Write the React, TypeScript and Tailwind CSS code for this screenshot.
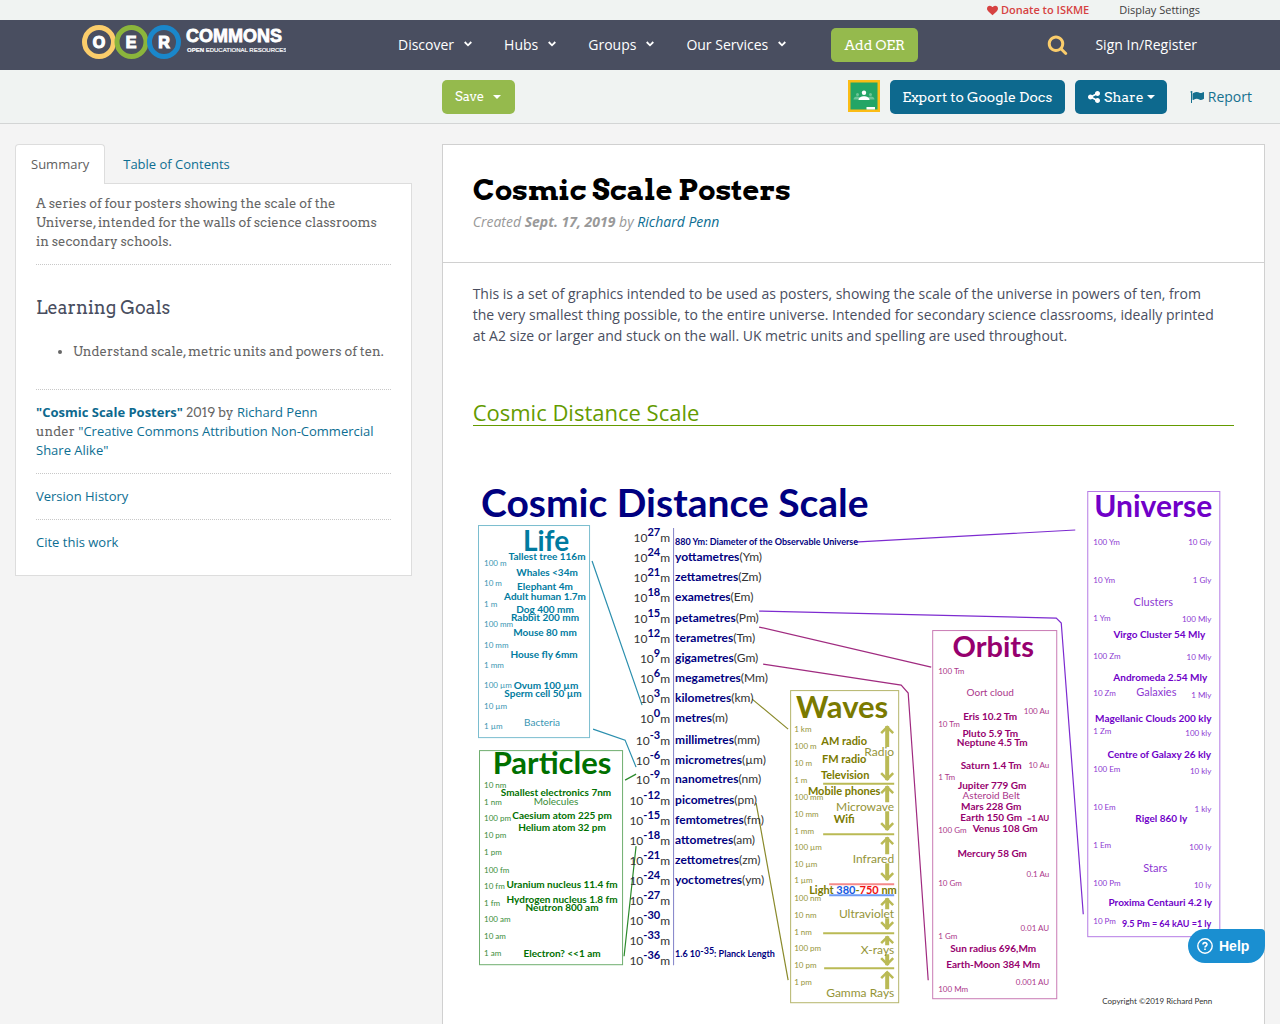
import React from 'react';

const slab = "font-[Arvo,'DejaVu_Serif',serif]";

const icons = {
  heart: 'M896 1664q-26 0-44-18l-624-602q-10-8-27.5-26t-55.5-65.5-68-97.5-53.5-121-23.5-138q0-220 127-344t351-124q62 0 126.5 21.5t120 58 95.5 68.5 76 68q36-36 76-68t95.5-68.5 120-58 126.5-21.5q224 0 351 124t127 344q0 221-229 450l-623 600q-18 18-44 18z',
  search: 'M1216 832q0-185-131.5-316.5t-316.5-131.5-316.5 131.5-131.5 316.5 131.5 316.5 316.5 131.5 316.5-131.5 131.5-316.5zm512 832q0 52-38 90t-90 38q-54 0-90-38l-343-342q-179 124-399 124-143 0-273.5-55.5t-225-150-150-225-55.5-273.5 55.5-273.5 150-225 225-150 273.5-55.5 273.5 55.5 225 150 150 225 55.5 273.5q0 220-124 399l343 343q37 37 37 90z',
  share: 'M1344 1024q133 0 226.5 93.5t93.5 226.5-93.5 226.5-226.5 93.5-226.5-93.5-93.5-226.5q0-12 2-34l-360-180q-92 86-218 86-133 0-226.5-93.5t-93.5-226.5 93.5-226.5 226.5-93.5q126 0 218 86l360-180q-2-22-2-34 0-133 93.5-226.5t226.5-93.5 226.5 93.5 93.5 226.5-93.5 226.5-226.5 93.5q-126 0-218-86l-360 180q2 22 2 34t-2 34l360 180q92-86 218-86z',
  flag: 'M320 256q0 72-64 110v1266q0 13-9.5 22.5t-22.5 9.5h-64q-13 0-22.5-9.5t-9.5-22.5v-1266q-64-38-64-110 0-53 37.5-90.5t90.5-37.5 90.5 37.5 37.5 90.5zm1472 64v763q0 25-12.5 38.5t-39.5 27.5q-215 116-369 116-61 0-123.5-22t-108.5-48-115.5-48-142.5-22q-192 0-464 146-17 9-33 9-26 0-45-19t-19-45v-742q0-32 31-55 21-14 79-43 236-120 421-120 107 0 200 29t219 88q38 19 88 19 54 0 117.5-21t110-47 88-47 54.5-21q26 0 45 19t19 45z',
};

const Icon: React.FC<{ name: keyof typeof icons; className: string }> = ({ name, className }) => (
  <svg viewBox="0 0 1792 1792" fill="currentColor" className={className} aria-hidden="true">
    <path d={icons[name]} />
  </svg>
);

const Caret: React.FC = () => (
  <svg viewBox="0 0 8 4" fill="currentColor" className="w-2 h-1 shrink-0" aria-hidden="true">
    <path d="M0 0h8L4 4z" />
  </svg>
);

const Logo: React.FC = () => (
  <svg viewBox="0 0 204 36" className="w-[204px] h-9 shrink-0" role="img" aria-label="OER Commons">
    <g fill="none" strokeWidth="5">
      <circle cx="17" cy="18" r="14.5" stroke="#fbcd6b" />
      <circle cx="49.5" cy="18" r="14.5" stroke="#8bb53c" />
      <circle cx="82" cy="18" r="14.5" stroke="#1a87cb" />
    </g>
    <g fill="#fff" fontFamily="'Liberation Sans', sans-serif" fontWeight="bold">
      <g fontSize="16" textAnchor="middle" stroke="#fff" strokeWidth="1.2">
        <text x="17" y="24">O</text>
        <text x="49" y="24">E</text>
        <text x="82" y="24">R</text>
      </g>
      <text x="104" y="18" fontSize="18" stroke="#fff" strokeWidth="0.8">COMMONS</text>
      <text x="105" y="28" fontSize="6" stroke="#fff" strokeWidth="0.2">OPEN <tspan fontWeight="normal">EDUCATIONAL RESOURCES</tspan></text>
    </g>
  </svg>
);

const NavItem: React.FC<{ label: string }> = ({ label }) => (
  <button className="flex items-center gap-[10px] whitespace-nowrap">
    {label}
    <svg viewBox="0 0 8 6" className="w-2 h-[6px]" fill="none" stroke="currentColor" strokeWidth="1.8" aria-hidden="true">
      <path d="M0.7 1L4 4.3L7.3 1" />
    </svg>
  </button>
);

const Header: React.FC = () => (
  <header>
    <div className="h-5 bg-[#f0f3f2] flex items-center justify-end gap-[30px] pr-20 text-[11px]">
      <a href="#donate" className="flex items-center gap-[3px] font-semibold text-[#d64242]">
        <Icon name="heart" className="w-[11px] h-[11px]" />
        Donate to ISKME
      </a>
      <a href="#settings" className="text-[#404040]">Display Settings</a>
    </div>
    <nav className="h-[50px] bg-[#494e60] text-white text-[14px] flex items-center pl-[82px] pr-[83px]">
      <a href="#home" className="-mt-[6px]"><Logo /></a>
      <div className="flex items-center gap-8 ml-28 pb-[2px]">
        <NavItem label="Discover" />
        <NavItem label="Hubs" />
        <NavItem label="Groups" />
        <NavItem label="Our Services" />
      </div>
      <button className={`${slab} ml-[45px] h-[34px] w-[87px] rounded-[5px] bg-[#95ba4d] text-[14px] whitespace-nowrap`}>Add OER</button>
      <div className="ml-auto flex items-center gap-[27px] pb-[2px]">
        <button aria-label="Search" className="text-[#fbcd6b]"><Icon name="search" className="w-[21px] h-[21px]" /></button>
        <a href="#signin" className="whitespace-nowrap">Sign In/Register</a>
      </div>
    </nav>
  </header>
);

const Toolbar: React.FC = () => (
  <div className="flex h-[54px] bg-[#f0f3f2] border-b border-[#d3d5d5]">
    <div className="w-1/3 shrink-0" />
    <div className="w-2/3 flex justify-between px-[15px] pt-[10px]">
      <button className={`${slab} flex items-center justify-center gap-[9px] h-[34px] w-[73px] rounded-[5px] bg-[#95ba4d] text-white text-[13px]`}>
        Save <Caret />
      </button>
      <div className="flex gap-[10px] text-white">
        <button aria-label="Share to Google Classroom" className="h-8">
          <svg viewBox="0 0 32 32" className="w-8 h-8">
            <rect width="32" height="32" fill="#fbbc15" />
            <rect x="2.500" y="2.500" width="27" height="27" fill="#23a566" />
            <g fill="#6dc497">
              <circle cx="9.500" cy="14.500" r="1.500" />
              <circle cx="22.500" cy="14.500" r="1.500" />
              <path d="M5.500 19.500c0-4 7-4 8 0zM18.500 19.500c1-4 8-4 8 0z" />
            </g>
            <circle cx="16" cy="12.800" r="2.200" fill="#fff" />
            <path d="M10.500 20c0-5 11-5 11 0z" fill="#fff" />
            <rect x="18.500" y="27" width="8.500" height="2.500" fill="#fff" />
          </svg>
        </button>
        <button className={`${slab} h-[34px] w-[175px] rounded-[5px] bg-[#0d698e] text-[14px] whitespace-nowrap`}>Export to Google Docs</button>
        <button className={`${slab} flex items-center justify-center gap-[3px] h-[34px] w-[92px] rounded-[5px] bg-[#0d698e] text-[14px]`}>
          <Icon name="share" className="w-[14px] h-[14px]" /> Share <Caret />
        </button>
        <a href="#report" className="flex items-center gap-[4px] h-[33px] px-[13px] text-[14px] text-[#16708f]">
          <Icon name="flag" className="w-[14px] h-[14px]" /> Report
        </a>
      </div>
    </div>
  </div>
);

const Sidebar: React.FC = () => (
  <aside className="w-1/3 shrink-0 px-[15px] text-[13px] leading-[19px]">
    <div className="flex" role="tablist">
      <button role="tab" aria-selected="true" className="relative h-10 -mb-px px-[15px] bg-white border border-b-0 border-[#dddddd] rounded-t text-[#606060]">Summary</button>
      <button role="tab" aria-selected="false" className="h-10 -mb-px px-[18px] text-[#0d6e92]">Table of Contents</button>
    </div>
    <div className="bg-white border border-[#dddddd] px-5 pt-[10px] pb-[23px] text-[#666666]">
      <p className={`${slab} pb-[13px] border-b border-dotted border-[#c8c8c8]`}>
        A series of four posters showing the scale of the Universe, intended for the walls of science classrooms in secondary schools.
      </p>
      <div className={`${slab} pt-[30px] pb-7 border-b border-dotted border-[#c8c8c8]`}>
        <h4 className="text-[18px] leading-[26px] text-[#494e60]">Learning Goals</h4>
        <ul className="mt-[21px] pl-[37px] list-disc">
          <li>Understand scale, metric units and powers of ten.</li>
        </ul>
      </div>
      <div className="py-[13px] border-b border-dotted border-[#c8c8c8]">
        <a href="#work" className="font-bold text-[#0d698e]">"Cosmic Scale Posters"</a>{' '}
        <span className={slab}>2019 by</span>{' '}
        <a href="#author" className="text-[#0d6e92]">Richard Penn</a>
        <br />
        <span className={slab}>under</span>{' '}
        <a href="#license" className="text-[#0d6e92]">"Creative Commons Attribution Non-Commercial Share Alike"</a>
      </div>
      <div className="py-[13px] border-b border-dotted border-[#c8c8c8]">
        <a href="#history" className="text-[#0d6e92]">Version History</a>
      </div>
      <div className="pt-[13px]">
        <a href="#cite" className="text-[#0d6e92]">Cite this work</a>
      </div>
    </div>
  </aside>
);

type Label = [number, number, string];

// Poster text is placed by its baseline, in the drawing's own units.
const Labels: React.FC<{ items: Label[]; size?: number; bold?: boolean; anchor?: 'start' | 'middle' | 'end' }> = ({
  items,
  size = 8,
  bold = false,
  anchor = 'start',
}) => (
  <g fontSize={size} fontWeight={bold ? 'bold' : 'normal'} textAnchor={anchor}>
    {items.map(([x, y, text]) => (
      <text key={text + y} x={x} y={y}>{text}</text>
    ))}
  </g>
);

const powers: [number, string, string, string][] = [
  [542, '27', '', ''],
  [562, '24', 'yottametres', '(Ym)'],
  [582, '21', 'zettametres', '(Zm)'],
  [602, '18', 'exametres', '(Em)'],
  [623, '15', 'petametres', '(Pm)'],
  [643, '12', 'terametres', '(Tm)'],
  [663, '9', 'gigametres', '(Gm)'],
  [683, '6', 'megametres', '(Mm)'],
  [703, '3', 'kilometres', '(km)'],
  [723, '0', 'metres', '(m)'],
  [745, '-3', 'millimetres', '(mm)'],
  [765, '-6', 'micrometres', '(µm)'],
  [784, '-9', 'nanometres', '(nm)'],
  [805, '-12', 'picometres', '(pm)'],
  [825, '-15', 'femtometres', '(fm)'],
  [845, '-18', 'attometres', '(am)'],
  [865, '-21', 'zettometres', '(zm)'],
  [885, '-24', 'yoctometres', '(ym)'],
  [905, '-27', '', ''],
  [925, '-30', '', ''],
  [945, '-33', '', ''],
  [965, '-36', '', ''],
];

const arrows: [number, number][] = [[726, 780], [786, 830], [837, 880], [898, 929], [936, 965]];

const Poster: React.FC = () => (
  <svg viewBox="473 476 761 560" className="w-full" fontFamily="Lato, sans-serif" role="img" aria-label="Cosmic Distance Scale poster">
    <text x="481" y="517" fontSize="39" fontWeight="bold" fill="#000080">Cosmic Distance Scale</text>

    <g fill="none" strokeWidth="1.2">
      <path d="M592 561L642 705M593 729L625 740L636 767" stroke="#2b8fae" />
      <path d="M625 780L636 774M636 846L624 956" stroke="#2c8a2c" />
      <path d="M854 542L1075 530M759 611L1056 618L1061 623L1083 914" stroke="#7d2bd0" />
      <path d="M759 627L931 667M763 664L901 685L908 693L928 980" stroke="#a02b80" />
      <path d="M752 699L788 729M756 803L788 980" stroke="#8a8a2b" />
    </g>
    <g fill="none" strokeWidth="1">
      <rect x="478.500" y="525.500" width="111" height="212" stroke="#7bbdcf" />
      <rect x="479.500" y="750.500" width="143" height="214" stroke="#6fae6f" />
      <rect x="790.500" y="690.500" width="108" height="312" stroke="#b5b56b" />
      <rect x="932.500" y="630.500" width="124" height="368" stroke="#c97bb4" />
      <rect x="1087.500" y="491.500" width="132" height="445" stroke="#b57be5" />
    </g>

    {/* powers of ten */}
    <path d="M673.500 528V965" stroke="#8080c8" />
    {powers.map(([y, power, name, unit]) => (
      <g key={power} fontSize="12" fill="#333">
        <text x="670" y={y} textAnchor="end">
          10<tspan dy="-6" fontSize="11" fontWeight="bold" fill="#000080">{power}</tspan><tspan dy="6">m</tspan>
        </text>
        {name && (
          <text x="675" y={y - 1}>
            <tspan fontWeight="bold" fill="#000080">{name}</tspan>{unit}
          </text>
        )}
      </g>
    ))}
    <g fill="#000080" fontSize="9" fontWeight="bold">
      <text x="675" y="545">880 Ym: Diameter of the Observable Universe</text>
      <text x="675" y="957">1.6 10<tspan dy="-3">-35</tspan><tspan dy="3">: Planck Length</tspan></text>
    </g>

    <g fill="#007ba0">
      <Labels size={28} bold anchor="middle" items={[[546, 551, 'Life']]} />
      <Labels size={10} bold anchor="middle" items={[
        [547, 560, 'Tallest tree 116m'], [547, 576, 'Whales <34m'], [545, 590, 'Elephant 4m'],
        [545, 600, 'Adult human 1.7m'], [545, 613, 'Dog 400 mm'], [545, 621, 'Rabbit 200 mm'],
        [545, 636, 'Mouse 80 mm'], [544, 658, 'House fly 6mm'], [546, 689, 'Ovum 100 µm'], [543, 697, 'Sperm cell 50 µm'],
      ]} />
      <g opacity="0.8">
        <Labels items={[
          [484, 566, '100 m'], [484, 586, '10 m'], [484, 607, '1 m'], [484, 627, '100 mm'], [484, 648, '10 mm'],
          [484, 668, '1 mm'], [484, 688, '100 µm'], [484, 709, '10 µm'], [484, 729, '1 µm'],
        ]} />
        <Labels size={10} anchor="middle" items={[[542, 726, 'Bacteria']]} />
      </g>
    </g>

    <g fill="#007000">
      <Labels size={31} bold anchor="middle" items={[[552, 774, 'Particles']]} />
      <Labels size={10} bold anchor="middle" items={[
        [556, 796, 'Smallest electronics 7nm'], [562, 819, 'Caesium atom 225 pm'], [562, 831, 'Helium atom 32 pm'],
        [562, 888, 'Uranium nucleus 11.4 fm'], [562, 903, 'Hydrogen nucleus 1.8 fm'], [562, 911, 'Neutron 800 am'],
        [562, 957, 'Electron? <<1 am'],
      ]} />
      <g opacity="0.8">
        <Labels items={[
          [484, 788, '10 nm'], [484, 805, '1 nm'], [484, 821, '100 pm'], [484, 838, '10 pm'], [484, 855, '1 pm'],
          [484, 873, '100 fm'], [484, 889, '10 fm'], [484, 906, '1 fm'], [484, 922, '100 am'], [484, 939, '10 am'], [484, 956, '1 am'],
        ]} />
        <Labels size={10} anchor="middle" items={[[556, 805, 'Molecules']]} />
      </g>
    </g>

    <g fill="none" stroke="#baba55">
      {arrows.map(([top, bottom]) => (
        <g key={top}>
          <path d={`M887 ${top}V${bottom}`} strokeWidth="4" />
          <path d={`M881 ${top + 7}l6-6l6 6M881 ${bottom - 7}l6 6l6-6`} strokeWidth="2.5" />
        </g>
      ))}
      <path d="M887 989V972" strokeWidth="4" />
      <path d="M881 978l6-6l6 6" strokeWidth="2.5" />
      <path d="M823 783.500H894M823 834H894M823 933H894M824 968H894" strokeWidth="2" />
      <path d="M829 884H894" strokeWidth="2" stroke="#f58a8a" />
      <path d="M829 895H894" strokeWidth="2" stroke="#6d9af5" />
    </g>
    {/* gaps in the arrows behind the band names */}
    <path d="M884 747h6v9h-6zM884 802h6v9h-6zM884 854h6v9h-6zM884 909h6v9h-6zM884 945h6v9h-6z" fill="#fff" />
    <g fill="#7a7a00">
      <Labels size={31} bold anchor="middle" items={[[842, 718, 'Waves']]} />
      <Labels size={11} bold anchor="middle" items={[
        [844, 745, 'AM radio'], [844, 763, 'FM radio'], [845, 779, 'Television'], [844, 795, 'Mobile phones'], [844, 823, 'Wifi'],
      ]} />
      <text x="809" y="894" fontSize="11" fontWeight="bold">
        Light <tspan fill="#1458e0">380</tspan>-<tspan fill="#f01010">750</tspan> nm
      </text>
      <g opacity="0.8">
        <Labels items={[
          [794, 732, '1 km'], [794, 749, '100 m'], [794, 766, '10 m'], [794, 783, '1 m'], [794, 800, '100 mm'],
          [794, 817, '10 mm'], [794, 834, '1 mm'], [794, 850, '100 µm'], [794, 867, '10 µm'], [794, 883, '1 µm'],
          [794, 901, '100 nm'], [794, 918, '10 nm'], [794, 935, '1 nm'], [794, 951, '100 pm'], [794, 968, '10 pm'], [794, 985, '1 pm'],
        ]} />
        <Labels size={12} anchor="end" items={[
          [894, 756, 'Radio'], [894, 811, 'Microwave'], [894, 863, 'Infrared'], [894, 918, 'Ultraviolet'],
          [894, 954, 'X-rays'], [894, 997, 'Gamma Rays'],
        ]} />
      </g>
    </g>

    <g fill="#96006e">
      <Labels size={29} bold anchor="middle" items={[[993, 657, 'Orbits']]} />
      <Labels size={10} bold anchor="middle" items={[
        [990, 720, 'Eris 10.2 Tm'], [990, 737, 'Pluto 5.9 Tm'], [992, 746, 'Neptune 4.5 Tm'], [991, 769, 'Saturn 1.4 Tm'],
        [992, 789, 'Jupiter 779 Gm'], [991, 810, 'Mars 228 Gm'], [991, 821, 'Earth 150 Gm'], [1005, 832, 'Venus 108 Gm'],
        [992, 857, 'Mercury 58 Gm'], [993, 952, 'Sun radius 696,Mm'], [993, 968, 'Earth-Moon 384 Mm'],
      ]} />
      <Labels bold anchor="end" items={[[1049, 821, '=1 AU']]} />
      <g opacity="0.8">
        <Labels items={[
          [938, 674, '100 Tm'], [938, 727, '10 Tm'], [938, 780, '1 Tm'], [938, 833, '100 Gm'], [938, 886, '10 Gm'],
          [938, 939, '1 Gm'], [938, 992, '100 Mm'],
        ]} />
        <Labels anchor="end" items={[
          [1049, 714, '100 Au'], [1049, 768, '10 Au'], [1049, 877, '0.1 Au'], [1049, 931, '0.01 AU'], [1049, 985, '0.001 AU'],
        ]} />
        <Labels size={10} anchor="middle" items={[[990, 696, 'Oort cloud'], [991, 799, 'Asteroid Belt']]} />
      </g>
    </g>

    <g fill="#7000c8">
      <Labels size={30} bold anchor="middle" items={[[1153, 517, 'Universe']]} />
      <Labels size={10} bold anchor="middle" items={[
        [1159, 638, 'Virgo Cluster 54 Mly'], [1160, 681, 'Andromeda 2.54 Mly'], [1153, 722, 'Magellanic Clouds 200 kly'],
        [1159, 758, 'Centre of Galaxy 26 kly'], [1161, 822, 'Rigel 860 ly'], [1160, 906, 'Proxima Centauri 4.2 ly'],
      ]} />
      <Labels size={9} bold anchor="end" items={[[1211, 927, '9.5 Pm = 64 kAU =1 ly']]} />
      <g opacity="0.8">
        <Labels items={[
          [1093, 545, '100 Ym'], [1093, 583, '10 Ym'], [1093, 621, '1 Ym'], [1093, 659, '100 Zm'], [1093, 696, '10 Zm'],
          [1093, 734, '1 Zm'], [1093, 772, '100 Em'], [1093, 810, '10 Em'], [1093, 848, '1 Em'], [1093, 886, '100 Pm'], [1093, 924, '10 Pm'],
        ]} />
        <Labels anchor="end" items={[
          [1211, 545, '10 Gly'], [1211, 583, '1 Gly'], [1211, 622, '100 Mly'], [1211, 660, '10 Mly'], [1211, 698, '1 Mly'],
          [1211, 736, '100 kly'], [1211, 774, '10 kly'], [1211, 812, '1 kly'], [1211, 850, '100 ly'], [1211, 888, '10 ly'],
        ]} />
        <Labels size={11} anchor="middle" items={[[1153, 606, 'Clusters'], [1156, 696, 'Galaxies'], [1155, 872, 'Stars']]} />
      </g>
    </g>

    <text x="1212" y="1004" fontSize="8" textAnchor="end" fill="#333">Copyright ©2019 Richard Penn</text>
  </svg>
);

const Article: React.FC = () => (
  <main className="w-2/3 px-[15px]">
    <article className="bg-white border border-[#d0d0d0]">
      <div className="px-[30px] pt-7 pb-[30px] border-b border-[#d0d0d0]">
        <h1 className={`${slab} text-[29px] leading-[34px] font-bold text-black`}>Cosmic Scale Posters</h1>
        <p className="pt-1 text-[14px] leading-[21px] italic text-[#999999]">
          Created <b>Sept. 17, 2019</b> by <a href="#author" className="text-[#0d6e92]">Richard Penn</a>
        </p>
      </div>
      <div className="px-[30px] pt-5">
        <p className="pr-3 text-[14px] leading-[21px] text-[#494e60]">
          This is a set of graphics intended to be used as posters, showing the scale of the universe in powers of ten, from
          the very smallest thing possible, to the entire universe. Intended for secondary science classrooms, ideally printed
          at A2 size or larger and stuck on the wall. UK metric units and spelling are used throughout.
        </p>
        <h2 className="mt-[54px] mb-[50px] text-[22px] leading-[25px] text-[#649b00] border-b border-[#649b00]">Cosmic Distance Scale</h2>
        <Poster />
      </div>
    </article>
  </main>
);

const App: React.FC = () => {
  return (
    <div className="min-h-screen bg-[#f4f4f4] font-['Open_Sans',sans-serif]">
      <Header />
      <Toolbar />
      <div className="flex items-start pt-5">
        <Sidebar />
        <Article />
      </div>
      <button className="fixed right-[15px] bottom-[61px] flex items-center gap-[6px] h-[34px] px-[9px] w-[77px] rounded-[17px] rounded-tr-[4px] bg-[#1a8fd1] text-white text-[14px] font-bold font-['Liberation_Sans',sans-serif]">
        <svg viewBox="0 0 16 16" className="w-4 h-4 shrink-0" fill="none" stroke="currentColor" strokeWidth="1.4" aria-hidden="true">
          <circle cx="8" cy="8" r="7.2" />
          <path d="M6 6.600C6 4 10 4 10 6.500C10 8 8 8 8 9.400M8 10.600V12" strokeWidth="1.6" />
        </svg>
        Help
      </button>
    </div>
  );
};

export default App;
